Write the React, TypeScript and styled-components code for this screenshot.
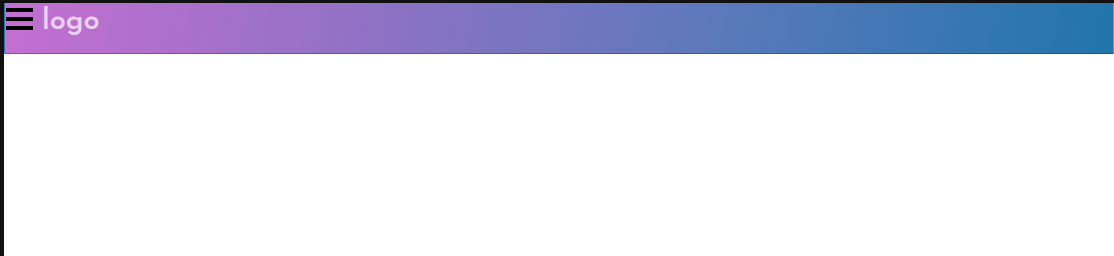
import React from "react";
import styled, { createGlobalStyle } from "styled-components";

const Global = createGlobalStyle`
  html, body { margin: 0; padding: 0; background: #ffffff; }
  body { font-family: Lato, "Open Sans", sans-serif; }
`;

const Page = styled.div`
  min-height: 100vh;
  box-sizing: border-box;
  border-left: 4px solid #111111;
  border-top: 3px solid #111111;
  background: #ffffff;
`;

const Header = styled.header`
  box-sizing: border-box;
  height: 51px;
  display: flex;
  align-items: flex-start;
  gap: 9px;
  padding: 5px 0 0 1px;
  background: linear-gradient(100deg, #c56fd1 0%, #8c72c4 35%, #5a79bb 65%, #2075ab 100%);
  border-left: 1px solid #2d73ad;
  border-right: 1px solid #c26dd0;
  box-shadow: inset 0 -1px 0 rgba(40, 20, 70, 0.35);
`;

const MenuButton = styled.button`
  display: flex;
  flex-direction: column;
  gap: 5px;
  padding: 0;
  margin: 0;
  border: none;
  background: transparent;
  width: 27px;
  cursor: pointer;
  padding-top: 0;
`;

const Bar = styled.span`
  display: block;
  width: 27px;
  height: 4px;
  background: #000000;
`;

const Logo = styled.div`
  font-family: "Josefin Sans", Lato, "Open Sans", sans-serif;
  font-size: 29px;
  font-weight: 600;
  color: #ecd2f1;
  line-height: 34px;
  margin-top: -3px;
`;

export default function App() {
  return (
    <>
      <Global />
      <Page>
        <Header>
          <MenuButton aria-label="menu">
            <Bar />
            <Bar />
            <Bar />
          </MenuButton>
          <Logo>logo</Logo>
        </Header>
      </Page>
    </>
  );
}
